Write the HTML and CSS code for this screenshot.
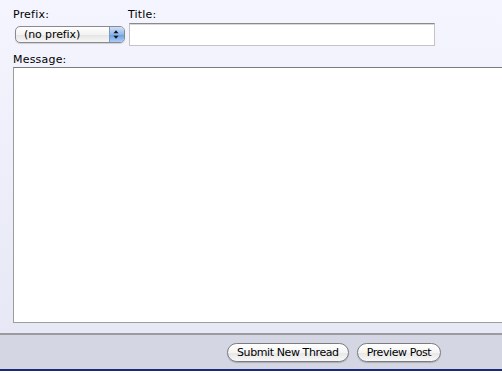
FILE: index.html
```html
<!DOCTYPE html>
<html lang="en">
<head>
  <meta charset="UTF-8">
  <title>New Thread</title>
  <link rel="stylesheet" href="styles.css">
</head>
<body>

  <form class="editor" method="POST">
    <div class="field-row">
      <div class="field prefix-field">
        <label for="prefix">Prefix:</label>
        <div class="popup">
          <select id="prefix" name="prefix">
            <option>(no prefix)</option>
          </select>
          <span class="popup-arrows">
            <svg width="14" height="15" viewBox="0 0 14 15">
              <path d="M4.5 6.2 L7 3.2 L9.5 6.2 Z" fill="#111"/>
              <path d="M4.5 8.8 L7 11.8 L9.5 8.8 Z" fill="#111"/>
            </svg>
          </span>
        </div>
      </div>
      <div class="field title-field">
        <label for="title">Title:</label>
        <input type="text" id="title" name="title">
      </div>
    </div>

    <label for="message" class="message-label">Message:</label>
    <textarea id="message" name="message"></textarea>
  </form>

  <div class="submit-bar">
    <button type="submit">Submit New Thread</button>
    <button type="button">Preview Post</button>
  </div>

</body>
</html>
```

FILE: styles.css
```css
html, body {
  overflow: hidden;
}
body {
  margin: 0;
  font-family: "DejaVu Sans", Verdana, sans-serif;
  font-size: 11px;
  color: #000;
  background: #fff;
}
label {
  display: block;
  line-height: 13px;
  letter-spacing: 0.2px;
}
.editor {
  margin: 0;
  padding: 8px 0 10px 13px;
  background: linear-gradient(#f5f5ff, #e6e8f5);
}
.field-row {
  display: flex;
  align-items: flex-start;
}
.prefix-field {
  width: 115px;
}
.prefix-field label {
  margin-bottom: 5px;
}
.popup {
  position: relative;
  margin-left: 2px;
  width: 110px;
  height: 17px;
}
.popup select {
  -webkit-appearance: none;
  appearance: none;
  width: 110px;
  height: 17px;
  margin: 0;
  padding: 0 0 0 8px;
  border: 1px solid #8a8a8a;
  border-radius: 5px;
  font-family: "DejaVu Sans", Verdana, sans-serif;
  font-size: 11px;
  letter-spacing: -0.1px;
  line-height: 15px;
  color: #000;
  background: linear-gradient(#ffffff, #f2f2f2 50%, #e4e4e4 51%, #f6f6f6);
  box-shadow: 0 1px 1px rgba(0,0,0,0.15);
}
.popup-arrows {
  position: absolute;
  top: 1px;
  right: 1px;
  width: 14px;
  height: 15px;
  border-radius: 0 4px 4px 0;
  background: linear-gradient(#cfe0f7, #8fb6ea 50%, #6a9ce3 51%, #a9cdf6);
  border-left: 1px solid #7e98c4;
}
.popup-arrows svg {
  display: block;
  margin-left: -1px;
}
.title-field label {
  margin-bottom: 2px;
}
.title-field input {
  display: block;
  box-sizing: border-box;
  margin: 0 0 0 1px;
  width: 306px;
  height: 23px;
  padding: 2px 3px;
  border: 1px solid #c4c4c4;
  border-top-color: #8a8a8a;
  box-shadow: inset 0 1px 0 #d8d8d8;
  background: #fff;
  font-family: "DejaVu Sans", Verdana, sans-serif;
  font-size: 11px;
}
.message-label {
  margin-top: 7px;
  margin-bottom: 1px;
}
.editor textarea {
  display: block;
  box-sizing: border-box;
  margin: 0;
  width: 520px;
  height: 256px;
  border: 1px solid #9c9c9c;
  border-top-color: #7a7a7a;
  background: #fff;
  resize: none;
  font-family: "DejaVu Sans", Verdana, sans-serif;
  font-size: 11px;
}
.submit-bar {
  display: flex;
  gap: 8px;
  height: 38px;
  padding: 8px 0 0 227px;
  box-sizing: border-box;
  border-top: 2px solid #9b9b9e;
  border-bottom: 2px solid #1b2a7c;
  background: #d4d6e4;
}
.submit-bar button {
  height: 19px;
  padding: 0 9px;
  border: 1px solid #7c7c7c;
  border-radius: 10px;
  font-family: "DejaVu Sans", Verdana, sans-serif;
  font-size: 11px;
  letter-spacing: -0.4px;
  line-height: 17px;
  color: #000;
  background: linear-gradient(#ffffff, #f4f4f4 50%, #e6e6e6 51%, #f8f8f8);
  box-shadow: 0 1px 1px rgba(0,0,0,0.2);
  cursor: pointer;
}
```
